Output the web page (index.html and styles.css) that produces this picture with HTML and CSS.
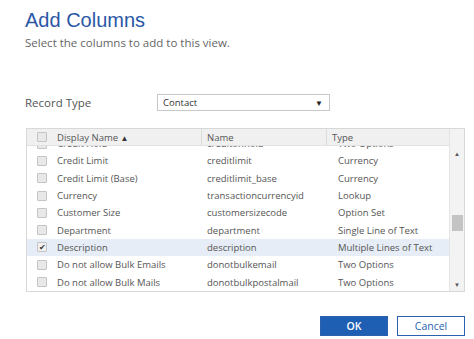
FILE: index.html
```html
<!DOCTYPE html>
<html lang="en">

<head>
  <meta charset="UTF-8" />
  <meta name="viewport" content="width=device-width, initial-scale=1.0" />
  <title>Add Columns</title>
  <link rel="stylesheet" href="styles.css">
</head>

<body>
  <div class="dialog">
    <h1 class="title">Add Columns</h1>
    <p class="subtitle">Select the columns to add to this view.</p>

    <div class="record-type">
      <span class="label">Record Type</span>
      <div class="select">
        <span>Contact</span>
        <span class="caret">&#9660;</span>
      </div>
    </div>

    <div class="grid">
      <div class="grid-main">
        <div class="row head">
          <span class="cell check"><span class="box"></span></span>
          <span class="cell dname">Display Name <span class="sort">&#9650;</span></span>
          <span class="cell name">Name</span>
          <span class="cell type">Type</span>
        </div>
        <div class="rows">
          <div class="rows-inner">
            <div class="row">
              <span class="cell check"><span class="box"></span></span>
              <span class="cell dname">Credit Hold</span>
              <span class="cell name">creditonhold</span>
              <span class="cell type">Two Options</span>
            </div>
            <div class="row">
              <span class="cell check"><span class="box"></span></span>
              <span class="cell dname">Credit Limit</span>
              <span class="cell name">creditlimit</span>
              <span class="cell type">Currency</span>
            </div>
            <div class="row">
              <span class="cell check"><span class="box"></span></span>
              <span class="cell dname">Credit Limit (Base)</span>
              <span class="cell name">creditlimit_base</span>
              <span class="cell type">Currency</span>
            </div>
            <div class="row">
              <span class="cell check"><span class="box"></span></span>
              <span class="cell dname">Currency</span>
              <span class="cell name">transactioncurrencyid</span>
              <span class="cell type">Lookup</span>
            </div>
            <div class="row">
              <span class="cell check"><span class="box"></span></span>
              <span class="cell dname">Customer Size</span>
              <span class="cell name">customersizecode</span>
              <span class="cell type">Option Set</span>
            </div>
            <div class="row">
              <span class="cell check"><span class="box"></span></span>
              <span class="cell dname">Department</span>
              <span class="cell name">department</span>
              <span class="cell type">Single Line of Text</span>
            </div>
            <div class="row selected">
              <span class="cell check"><span class="box checked">&#10004;</span></span>
              <span class="cell dname">Description</span>
              <span class="cell name">description</span>
              <span class="cell type">Multiple Lines of Text</span>
            </div>
            <div class="row">
              <span class="cell check"><span class="box"></span></span>
              <span class="cell dname">Do not allow Bulk Emails</span>
              <span class="cell name">donotbulkemail</span>
              <span class="cell type">Two Options</span>
            </div>
            <div class="row">
              <span class="cell check"><span class="box"></span></span>
              <span class="cell dname">Do not allow Bulk Mails</span>
              <span class="cell name">donotbulkpostalmail</span>
              <span class="cell type">Two Options</span>
            </div>
          </div>
        </div>
      </div>
      <div class="scrollbar">
        <span class="arrow">&#9650;</span>
        <span class="thumb"></span>
        <span class="arrow">&#9660;</span>
      </div>
    </div>

    <div class="actions">
      <button class="btn primary">OK</button>
      <button class="btn">Cancel</button>
    </div>
  </div>
</body>

</html>
```

FILE: styles.css
```css
body {
  margin: 0;
  background-color: #fff;
  font-family: "Open Sans", "Noto Sans", sans-serif;
  color: #444;
}

.dialog {
  width: 474px;
  height: 339px;
  padding: 0 9px 0 25px;
  box-sizing: border-box;
}

.title {
  margin: 0;
  padding-top: 6px;
  font-family: "Liberation Sans", Arial, sans-serif;
  font-size: 20px;
  font-weight: 400;
  line-height: 28px;
  color: #2b58a6;
}

.subtitle {
  margin: 1px 0 0;
  font-size: 11.5px;
  line-height: 16px;
  color: #666;
}

.record-type {
  display: flex;
  align-items: center;
  margin-top: 43px;
}

.label {
  width: 132px;
  font-size: 11.5px;
  color: #555;
}

.select {
  display: flex;
  justify-content: space-between;
  align-items: center;
  width: 173px;
  height: 17px;
  padding: 0 6px 0 5px;
  box-sizing: border-box;
  border: 1px solid #c8c8c8;
  font-size: 9.5px;
  color: #333;
}

.caret {
  font-size: 8px;
  color: #222;
}

.grid {
  display: flex;
  height: 164px;
  margin-top: 17px;
  margin-left: 1px;
  border: 1px solid #d8d8d8;
  box-sizing: border-box;
}

.grid-main {
  flex: 1;
  display: flex;
  flex-direction: column;
  min-width: 0;
}

.row {
  display: flex;
  align-items: center;
  height: 17.3px;
  font-size: 9.5px;
  color: #555;
  white-space: nowrap;
}

.row.head {
  height: 16px;
  flex: none;
  background-color: #f0f0f0;
  border-bottom: 1px solid #e2e2e2;
  color: #555;
}

.row.selected {
  background-color: #e6edf6;
}

.rows {
  flex: 1;
  overflow: hidden;
}

.rows-inner {
  margin-top: -11px;
}

.cell {
  overflow: hidden;
}

.check {
  width: 30px;
  display: flex;
  justify-content: center;
}

.dname {
  width: 144px;
}

.head .name,
.head .type {
  border-left: 1px solid #dcdcdc;
  padding-left: 5px;
  height: 100%;
  display: flex;
  align-items: center;
}

.name {
  width: 125px;
  padding-left: 6px;
}

.head .name {
  width: 119px;
}

.type {
  flex: 1;
  padding-left: 6px;
}

.head .type {
  padding-left: 5px;
}

.box {
  width: 8px;
  height: 8px;
  border: 1px solid #c4c4c4;
  background-color: #e8e8e8;
  border-radius: 1px;
  font-size: 8px;
  line-height: 8px;
  text-align: center;
  color: #333;
}

.box.checked {
  background-color: #f0f0f0;
}

.sort {
  font-size: 8px;
  color: #333;
}

.scrollbar {
  width: 14px;
  display: flex;
  flex-direction: column;
  align-items: center;
  background-color: #f3f3f3;
  border-left: 1px solid #e4e4e4;
}

.arrow {
  font-size: 6px;
  color: #555;
  line-height: 8px;
}

.scrollbar .arrow:first-child {
  margin-top: 21px;
}

.thumb {
  width: 11px;
  height: 16px;
  margin-top: 57px;
  margin-bottom: auto;
  background-color: #c4c4c4;
}

.scrollbar .arrow:last-child {
  margin-bottom: 2px;
}

.actions {
  display: flex;
  justify-content: flex-end;
  gap: 9px;
  margin-top: 24px;
}

.btn {
  width: 68px;
  height: 20px;
  padding: 0;
  border: 1px solid #2a62b0;
  background-color: #fff;
  color: #2a62b0;
  font-family: "Open Sans", "Noto Sans", sans-serif;
  font-size: 10.5px;
}

.btn.primary {
  background-color: #1e5fb3;
  color: #fff;
  font-weight: 600;
}
```
